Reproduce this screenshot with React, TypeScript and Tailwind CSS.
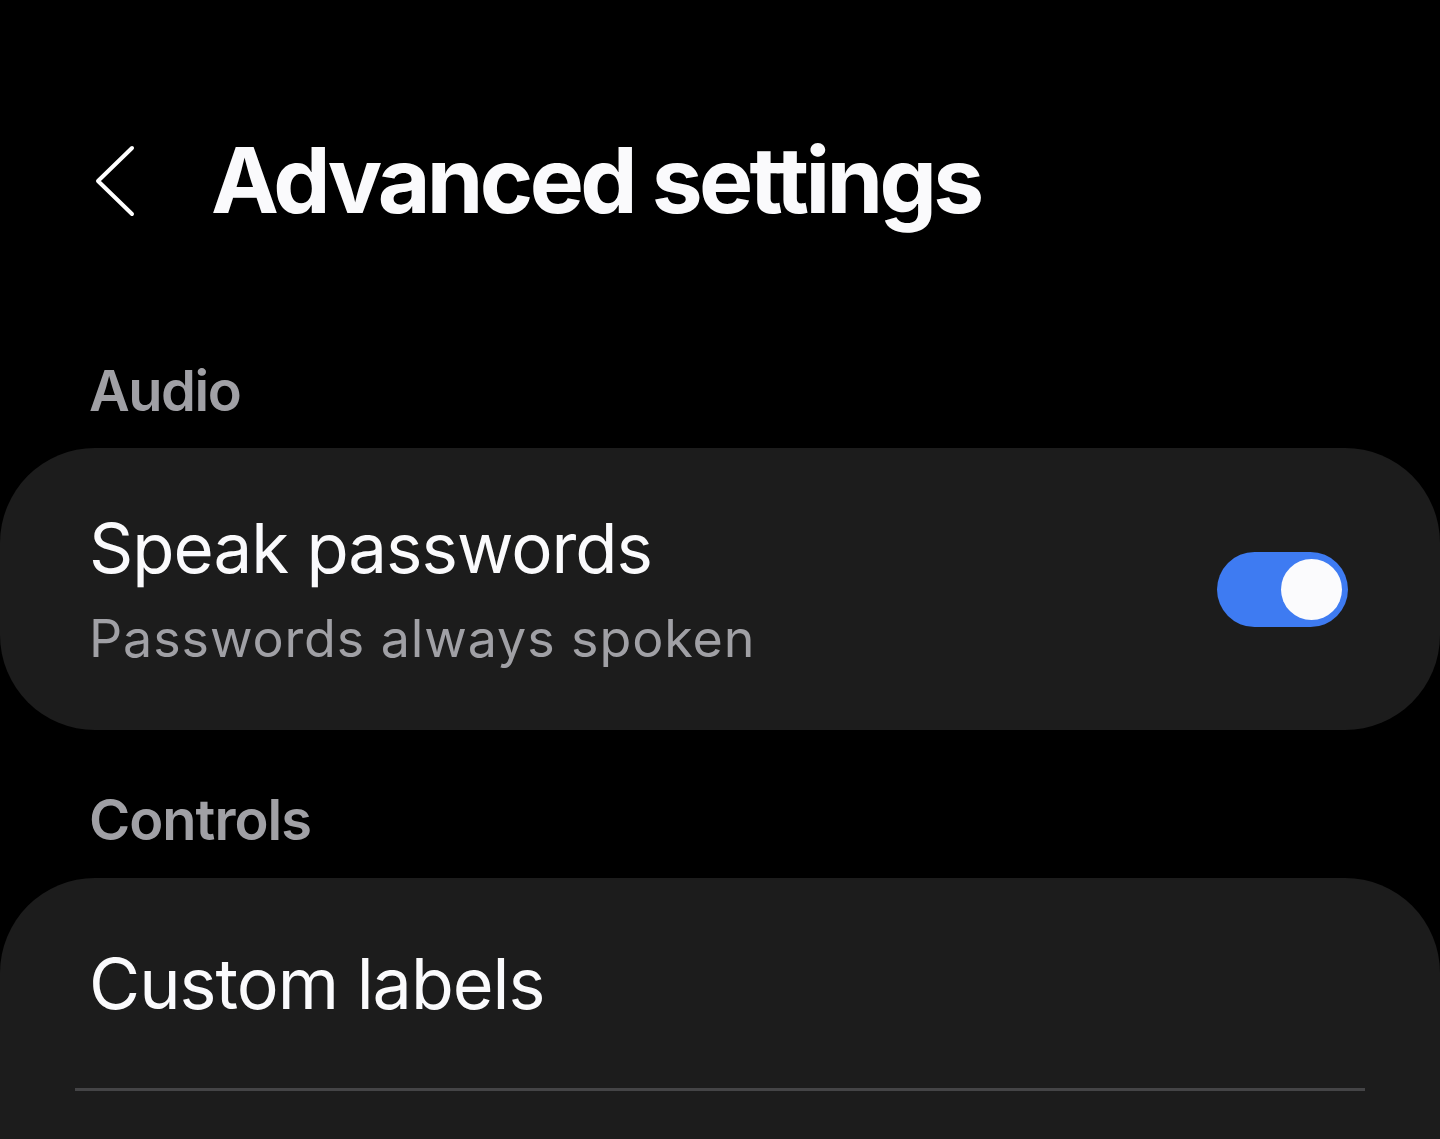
import React from "react";

export default function App() {
  const font = { fontFamily: "Inter, 'Noto Sans', sans-serif", fontFeatureSettings: "'calt' 0, 'liga' 0, 'dlig' 0" };
  return (
    <div className="w-[1440px] h-[1139px] overflow-hidden bg-black text-white" style={font}>
      {/* Header */}
      <div className="flex items-center h-[91px] mt-[135px]">
        <div className="w-[211px] flex justify-start pl-[95px]">
          <svg width="42" height="72" viewBox="0 0 42 72" fill="none">
            <polyline
              points="37,3 3,36 37,69"
              stroke="white"
              strokeWidth="4"
              strokeLinecap="round"
              strokeLinejoin="round"
            />
          </svg>
        </div>
        <h1 className="text-[91px] leading-none font-bold tracking-[-3.7px] text-[#fafafc]">
          Advanced settings
        </h1>
      </div>

      {/* Audio */}
      <div className="mt-[137px] pl-[89px] text-[56px] leading-none font-semibold tracking-[-1.5px] text-[#a0a0a5]">
        Audio
      </div>
      <div className="mt-[29px] h-[282px] rounded-[95px] bg-[#1c1c1c] flex items-center justify-between pl-[89px] pr-[92px]">
        <div className="flex flex-col">
          <div className="text-[69px] leading-none tracking-[-1px] text-[#fafafc]">Speak passwords</div>
          <div className="mt-[30px] text-[52px] leading-none tracking-[0.9px] text-[#a0a0a5]">
            Passwords always spoken
          </div>
        </div>
        <div className="relative w-[131px] h-[75px] rounded-full bg-[#3e7bf2] mt-[1px]">
          <div className="absolute right-[6px] top-[7px] w-[61px] h-[61px] rounded-full bg-[#fbfbfd]" />
        </div>
      </div>

      {/* Controls */}
      <div className="mt-[62px] pl-[89px] text-[56px] leading-none font-semibold tracking-[-1px] text-[#a0a0a5]">
        Controls
      </div>
      <div className="mt-[30px] h-[400px] rounded-[95px] bg-[#1c1c1c] pt-[71px]">
        <div className="pl-[89px] text-[70px] leading-none tracking-[-1px] text-[#fafafc]">Custom labels</div>
        <div className="mt-[69px] mx-[75px] h-[3px] bg-[#444446]" />
      </div>
    </div>
  );
}
